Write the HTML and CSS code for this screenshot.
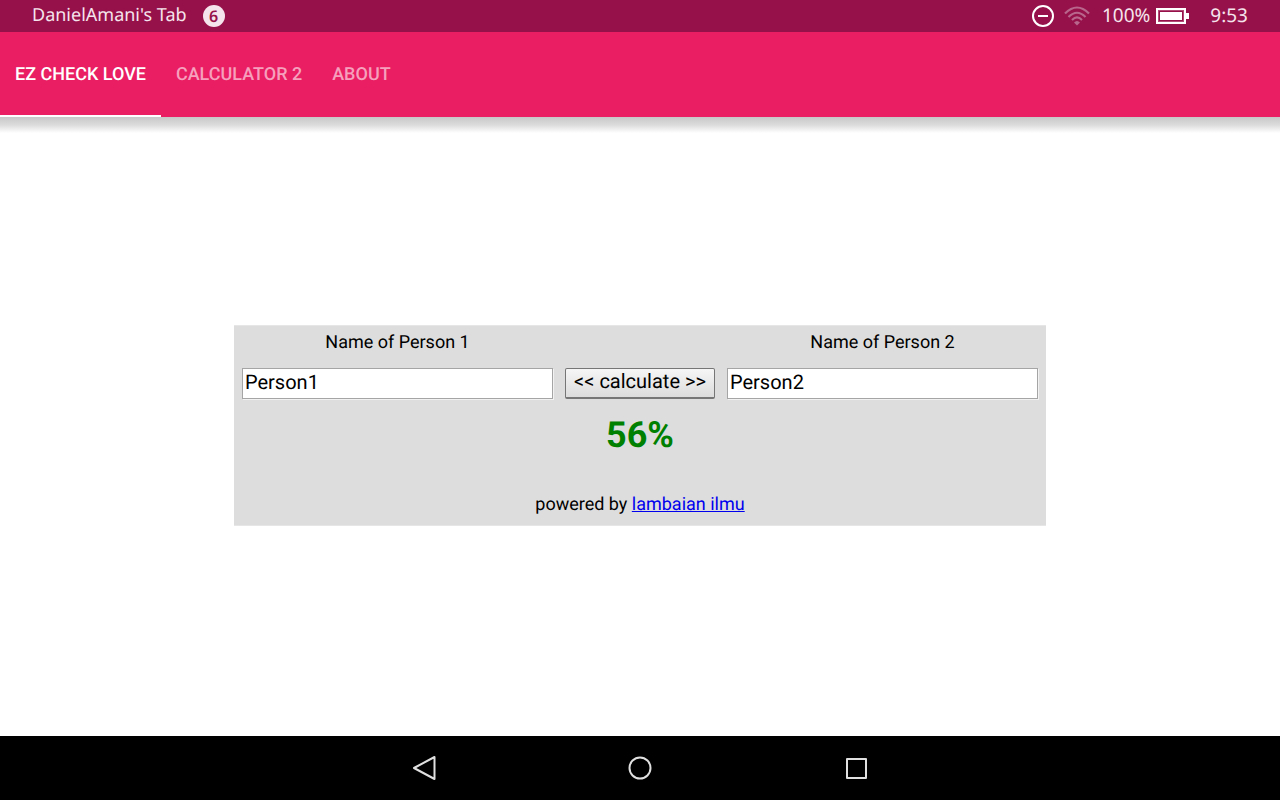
FILE: index.html
```
<!DOCTYPE html>
<html lang="en">
<head>
    <meta charset="UTF-8">
    <meta name="viewport" content="width=device-width, initial-scale=1.0">
    <title>EZ Check Love</title>
    <link rel="stylesheet" href="styles.css">
</head>
<body>
    <div class="status-bar">
        <span class="device-name">DanielAmani's Tab</span>
        <span class="badge">6</span>
        <div class="status-icons">
            <svg class="dnd" width="24" height="24" viewBox="0 0 24 24" fill="none" stroke="#fff" stroke-width="2">
                <circle cx="12" cy="12" r="10"/>
                <path d="M7 12h10"/>
            </svg>
            <svg class="wifi" width="26" height="20" viewBox="0 0 26 20" fill="none" stroke="#b9668c" stroke-width="2.200">
                <path d="M1 7.500Q13-4.500 25 7.500"/>
                <path d="M4.500 11Q13 2.500 21.500 11"/>
                <path d="M8 14Q13 9 18 14"/>
                <path d="M10 16.500Q13 13.500 16 16.500L13 19.500z" fill="#b9668c" stroke="none"/>
            </svg>
            <span class="percent">100%</span>
            <svg class="battery" width="34" height="16" viewBox="0 0 34 16">
                <rect x="1" y="1" width="28" height="14" fill="#96114a" stroke="#fff" stroke-width="2"/>
                <rect x="2.500" y="2.500" width="25" height="11" fill="none" stroke="#b14a75"/>
                <path d="M4 4h22v8H4zM30 5h3v6h-3z" fill="#fff"/>
            </svg>
            <span class="clock">9:53</span>
        </div>
    </div>

    <nav class="tabs">
        <a class="tab active" href="#">EZ CHECK LOVE</a>
        <a class="tab" href="#calculator2">CALCULATOR 2</a>
        <a class="tab" href="#about">ABOUT</a>
    </nav>

    <main class="content">
        <form class="calculator" onsubmit="return false">
            <label class="label-1" for="person1">Name of Person 1</label>
            <label class="label-2" for="person2">Name of Person 2</label>
            <input type="text" id="person1" value="Person1">
            <button type="submit">&lt;&lt; calculate &gt;&gt;</button>
            <input type="text" id="person2" value="Person2">
            <output class="result" for="person1 person2">56%</output>
            <p class="powered">powered by <a href="#lambaian-ilmu">lambaian ilmu</a></p>
        </form>
    </main>

    <div class="nav-bar">
        <button class="nav-btn" aria-label="Back">
            <svg width="32" height="32" viewBox="0 0 32 32"><path d="M6 16L26.500 5v22z"/></svg>
        </button>
        <button class="nav-btn" aria-label="Home">
            <svg width="32" height="32" viewBox="0 0 32 32"><circle cx="16" cy="16" r="10.500"/></svg>
        </button>
        <button class="nav-btn" aria-label="Recent apps">
            <svg width="32" height="32" viewBox="0 0 32 32"><rect x="7" y="7" width="19" height="19"/></svg>
        </button>
    </div>
</body>
</html>
```
FILE: styles.css
```
* { box-sizing: border-box; }
body {
    display: flex;
    flex-direction: column;
    min-height: 100vh;
    margin: 0;
    font-family: Roboto, "Liberation Sans", sans-serif;
    font-size: 18px;
    text-rendering: geometricPrecision;
    background: #fff;
    color: #000;
}
svg { display: block; }

/* Android status bar */
.status-bar {
    display: flex;
    align-items: center;
    height: 32px;
    padding: 0 32px;
    background: #96114a;
    color: #f5e4ec;
    font-family: "Noto Sans", "Open Sans", sans-serif;
    font-size: 18px;
    line-height: 30px;
}
.device-name, .percent, .clock { padding-bottom: 2px; }
.badge {
    width: 22px;
    height: 22px;
    margin-left: 16px;
    border-radius: 50%;
    background: #f5e4ec;
    color: #96114a;
    font-size: 16px;
    font-weight: 600;
    line-height: 22px;
    text-align: center;
}
.status-icons { display: flex; align-items: center; margin-left: auto; font-size: 19px; }
.wifi { margin-left: 9px; }
.percent { margin-left: 12px; }
.battery { margin-left: 6px; }
.clock { margin-left: 20px; }

/* Tabs */
.tabs {
    display: flex;
    height: 85px;
    background: #ea1e63;
    position: relative;
}
.tabs::after {
    content: "";
    position: absolute;
    top: 100%;
    left: 0;
    right: 0;
    height: 16px;
    background: linear-gradient(#c8c8c8, #dcdcdc 50%, #fff);
}
.tab {
    padding: 0 15px;
    border-bottom: 2px solid transparent;
    color: #f6a0bd;
    font-weight: 500;
    line-height: 86px;
    text-decoration: none;
}
.tab.active { color: #fff; border-bottom-color: #fff; }

/* Calculator */
.content {
    flex: 1;
    display: flex;
    align-items: center;
    justify-content: center;
    padding-bottom: 2px;
}
.calculator {
    display: grid;
    grid-template-columns: 1fr 150px 1fr;
    column-gap: 12px;
    width: 100%;
    max-width: 812px;
    padding: 5px 8px 8px;
    background: #ddd;
    border: 1px solid #e6e6e6;
    border-width: 1px 0;
    text-align: center;
    line-height: 24px;
}
.label-2 { grid-column: 3; }
.calculator input,
.calculator button {
    width: 100%;
    height: 31px;
    margin: 13px 0 0;
    color: #000;
    font-family: inherit;
    font-size: 20px;
    text-rendering: inherit;
}
.calculator input {
    padding: 0 2px 3px;
    background: #fff;
    border: 1px solid #a5a5a5;
    box-shadow: 1px 1px 0 #f2f2f2;
}
.calculator button {
    padding: 0 0 4px;
    background: linear-gradient(#f6f6f6, #dcdcdc);
    border: 1px solid #767676;
    border-bottom-width: 2px;
    border-radius: 2px;
}
.result {
    grid-column: 1 / 4;
    margin-top: 16px;
    color: #008000;
    font-size: 36px;
    font-weight: bold;
    line-height: 40px;
}
.powered { grid-column: 1 / 4; margin: 38px 0 0; }
.powered a { color: #00e; }

/* Android navigation buttons */
.nav-bar {
    display: flex;
    justify-content: center;
    align-items: center;
    gap: 184px;
    height: 64px;
    background: #000;
}
.nav-btn { padding: 0; background: none; border: none; }
.nav-btn svg { fill: none; stroke: #e0e0e0; stroke-width: 2; stroke-linejoin: round; }
```
